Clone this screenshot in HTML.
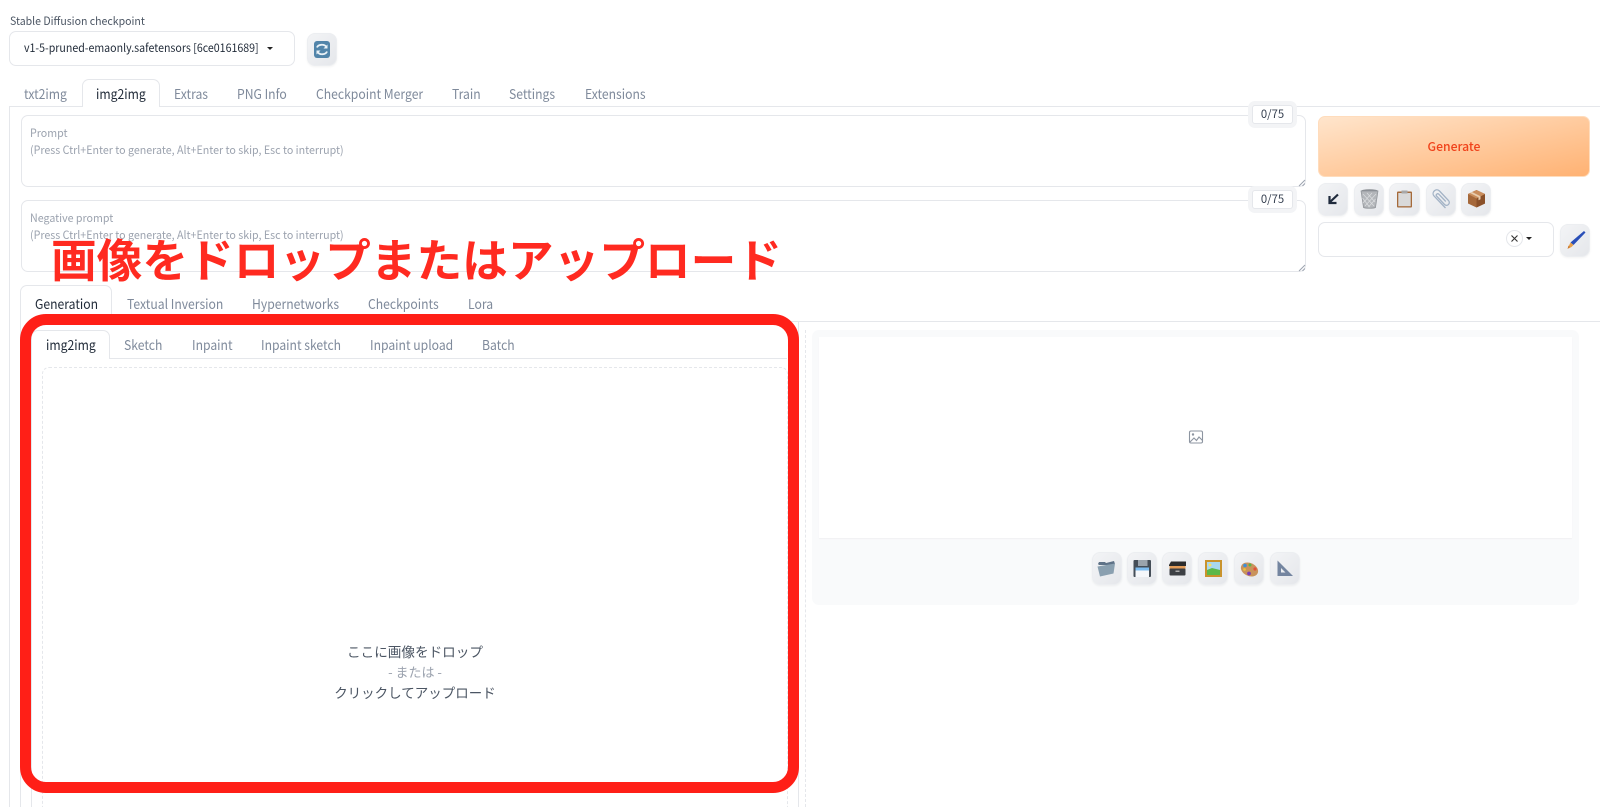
<!DOCTYPE html>
<html lang="ja"><head><meta charset="utf-8"><title>img2img</title>
<style>
*{box-sizing:border-box}
html{margin:0;padding:0;background:#fff;width:1600px;height:807px;overflow:hidden}
body{margin:0;padding:0;background:#fff;width:1600px;height:807px;position:relative;overflow:hidden;font-family:"Noto Sans CJK JP","Liberation Sans",sans-serif;color:#374151;font-size:13.5px}
#p{position:absolute;left:0;top:0;width:1600px;height:807px;overflow:hidden;contain:paint}
.a{position:absolute}
.t{position:absolute;white-space:nowrap;line-height:18px}
.tab{color:#7f8a9b;font-size:13.3px;transform:scaleX(.915);transform-origin:0 0}
.act{color:#1f2937}
.ph{color:#9ca3af;font-size:11.2px;line-height:16px;transform:scaleX(.953);transform-origin:0 0}
.box{position:absolute;background:#fff;border:1px solid #e5e7eb;border-radius:7px}
.btn{position:absolute;border-radius:8px;background:linear-gradient(to bottom right,#f3f4f6,#e5e7eb);border:1px solid #eceef1;box-shadow:0 1px 2px rgba(0,0,0,.05)}
.btn svg{position:absolute;left:-1px;top:-1px}
.line{position:absolute;background:#e5e7eb}
.cnt{position:absolute;width:41px;height:19px;background:#fff;border:1px solid #e5e7eb;border-radius:3px;box-shadow:0 0 0 4px #f3f4f6;font-size:11.3px;line-height:17px;text-align:center;color:#374151}
.dash{position:absolute;width:0;border-left:1px dashed #e5e7eb}
.tabbox{position:absolute;background:#fff;border:1px solid #e5e7eb;border-bottom:0;border-radius:7px 7px 0 0}
</style></head><body><div id="p">

<div class="t" style="left:10px;top:12px;font-size:11.2px;color:#4b5563;transform:scaleX(.943);transform-origin:0 0">Stable Diffusion checkpoint</div>
<div class="box" style="left:9px;top:31px;width:286px;height:35px"></div>
<div class="t" style="left:24px;top:39px;font-size:11.3px;color:#1f2937;transform:scaleX(.94);transform-origin:0 0">v1-5-pruned-emaonly.safetensors [6ce0161689]</div>
<div class="a" style="left:267px;top:47px;border:3.5px solid transparent;border-top:3.5px solid #222;"></div>
<div class="btn" style="left:307px;top:33px;width:30px;height:33px"><svg width="30" height="33" viewBox="0 0 30 33"><rect x="7" y="8" width="16" height="17" rx="3" fill="#5285aa"/><path d="M10 14.500c1-3 7-4 9.500-.5M20 18.500c-1 3-7 4-9.500 .5" fill="none" stroke="#eaf2f7" stroke-width="1.800"/><path d="M20.500 11.500v4h-4zM9.500 21.500v-4h4z" fill="#eaf2f7"/></svg></div>

<!-- top tabs -->
<div class="line" style="left:9px;top:106px;width:1591px;height:1px"></div>
<div class="line" style="left:9px;top:106px;width:1px;height:701px"></div>
<div class="tabbox" style="left:82px;top:79px;width:78px;height:28px"></div>
<div class="t tab" style="left:24px;top:84.500px">txt2img</div>
<div class="t tab act" style="left:96px;top:84.500px">img2img</div>
<div class="t tab" style="left:174px;top:84.500px">Extras</div>
<div class="t tab" style="left:237px;top:84.500px">PNG Info</div>
<div class="t tab" style="left:316px;top:84.500px">Checkpoint Merger</div>
<div class="t tab" style="left:452px;top:84.500px">Train</div>
<div class="t tab" style="left:509px;top:84.500px">Settings</div>
<div class="t tab" style="left:585px;top:84.500px">Extensions</div>

<!-- prompts -->
<div class="box" style="left:21px;top:115px;width:1285px;height:72px"></div>
<div class="t ph" style="left:30px;top:125px">Prompt</div>
<div class="t ph" style="left:30px;top:142px">(Press Ctrl+Enter to generate, Alt+Enter to skip, Esc to interrupt)</div>
<svg class="a" style="left:1298px;top:179px" width="8" height="8"><path d="M1 7L7 1M4.500 7L7 4.500" stroke="#9ca3af" fill="none"/></svg>
<div class="cnt" style="left:1252px;top:105px">0/75</div>

<div class="box" style="left:21px;top:200px;width:1285px;height:72px"></div>
<div class="t ph" style="left:30px;top:210px">Negative prompt</div>
<div class="t ph" style="left:30px;top:227px">(Press Ctrl+Enter to generate, Alt+Enter to skip, Esc to interrupt)</div>
<svg class="a" style="left:1298px;top:264px" width="8" height="8"><path d="M1 7L7 1M4.500 7L7 4.500" stroke="#9ca3af" fill="none"/></svg>
<div class="cnt" style="left:1252px;top:190px">0/75</div>

<!-- generate column -->
<div class="a" style="left:1318px;top:116px;width:272px;height:61px;border-radius:7px;background:linear-gradient(to bottom right,#ffe5cc,#ffb273);border:1px solid #ffdcbc;text-align:center;line-height:58px;color:#f0421a;font-size:12.2px;font-weight:500">Generate</div>

<div class="btn" style="left:1318px;top:183px;width:30px;height:33px"><svg width="30" height="33"><path d="M12 19L20 11.500M11.500 13v7h7" fill="none" stroke="#1f2a3c" stroke-width="2.200"/></svg></div>
<div class="btn" style="left:1354px;top:183px;width:30px;height:33px"><svg width="30" height="33"><ellipse cx="15.500" cy="8" rx="8.500" ry="1.800" fill="#8b8f94"/><path d="M7 8h17l-2.500 16.500c-2 1-10 1-12 0z" fill="#b3b6ba" stroke="#8f9398" stroke-width=".7"/><path d="M9 11l11 12M13 10l8 9M8.500 15l7 9M22 11L11 23M18 10L9 20M21.500 16l-7 8" stroke="#dcdee0" stroke-width=".7"/></svg></div>
<div class="btn" style="left:1389px;top:183px;width:31px;height:33px"><svg width="31" height="33"><rect x="8" y="8.500" width="15" height="16" rx="1" fill="#a56a3a"/><rect x="9.300" y="10" width="12.400" height="13.200" fill="#d9d9d9"/><rect x="12.500" y="7.500" width="6" height="3" fill="#a8a8a8"/></svg></div>
<div class="btn" style="left:1426px;top:183px;width:30px;height:33px"><svg width="30" height="33"><path d="M19.500 25L8 13c-3-3.500 2-8.500 5.500-5l9 9.500c2.500 3-1.500 6.500-4 4L10.500 13c-1-1.500 1-3 2.300-1.800l7 7.300" fill="none" stroke="#a3b3c6" stroke-width="1.300"/></svg></div>
<div class="btn" style="left:1461px;top:183px;width:30px;height:33px"><svg width="30" height="33"><path d="M15.500 7l8.500 4v9.500l-8.500 4-8.500-4V11z" fill="#a5683a"/><path d="M15.500 15.500l8.500-4.500v9.500l-8.500 4z" fill="#8a5029"/><path d="M7 11l8.500-4 8.500 4-8.500 4.500z" fill="#c98d5c"/><path d="M11 9l8.500 4.300v3l-2 1v-3L9 10z" fill="#e8cdae"/></svg></div>

<div class="box" style="left:1318px;top:222px;width:236px;height:35px"></div>
<div class="a" style="left:1506px;top:230px;width:17px;height:17px;border-radius:50%;border:1px solid #e5e7eb;background:#fff"></div>
<svg class="a" style="left:1506px;top:230px" width="17" height="17"><path d="M5.500 5.500l6 6M11.500 5.500l-6 6" stroke="#333" stroke-width="1.100"/></svg>
<div class="a" style="left:1526px;top:237px;border:3px solid transparent;border-top:3.500px solid #222"></div>
<div class="btn" style="left:1560px;top:224px;width:30px;height:33px"><svg width="30" height="33"><path d="M24 7l1.500 1.500L13.500 21l-3-2.500z" fill="#2a4fb8"/><path d="M10.500 18.500l3 2.500-2 2-3 1.500 .5-3z" fill="#e8a04a"/><path d="M8.500 21.500l1.500 1.500-2.500 2z" fill="#c9762a"/></svg></div>

<!-- generation tabs -->
<div class="line" style="left:20px;top:321px;width:1580px;height:1px"></div>
<div class="line" style="left:20px;top:321px;width:1px;height:486px"></div>
<div class="tabbox" style="left:20px;top:285px;width:92px;height:37px"></div>
<div class="t tab act" style="left:35px;top:295px">Generation</div>
<div class="t tab" style="left:127px;top:295px">Textual Inversion</div>
<div class="t tab" style="left:252px;top:295px">Hypernetworks</div>
<div class="t tab" style="left:368px;top:295px">Checkpoints</div>
<div class="t tab" style="left:468px;top:295px">Lora</div>

<!-- img2img column -->
<div class="line" style="left:31px;top:358px;width:756px;height:1px"></div>
<div class="line" style="left:31px;top:330px;width:1px;height:477px"></div>
<div class="line" style="left:798px;top:321px;width:1px;height:486px"></div>
<div class="tabbox" style="left:31px;top:330px;width:79px;height:29px"></div>
<div class="t tab act" style="left:46px;top:336px">img2img</div>
<div class="t tab" style="left:124px;top:336px">Sketch</div>
<div class="t tab" style="left:192px;top:336px">Inpaint</div>
<div class="t tab" style="left:261px;top:336px">Inpaint sketch</div>
<div class="t tab" style="left:370px;top:336px">Inpaint upload</div>
<div class="t tab" style="left:482px;top:336px">Batch</div>

<div class="a" style="left:42px;top:367px;width:746px;height:440px;border:1px dashed #e5e7eb;border-bottom:0;border-radius:7px 7px 0 0"></div>
<div class="dash" style="left:805px;top:330px;height:477px"></div>

<div class="t" style="left:42px;width:746px;text-align:center;top:642px;color:#4b5563;font-size:13.6px">ここに画像をドロップ</div>
<div class="t" style="left:42px;width:746px;text-align:center;top:663px;color:#9ca3af;font-size:13px">- または -</div>
<div class="t" style="left:42px;width:746px;text-align:center;top:683px;color:#4b5563;font-size:13.5px">クリックしてアップロード</div>

<!-- gallery -->
<div class="a" style="left:812px;top:330px;width:767px;height:275px;background:#f9fafb;border-radius:7px"></div>
<div class="a" style="left:819px;top:337px;width:753px;height:201px;background:#fff;box-shadow:0 1px 1px rgba(0,0,0,.04)"></div>
<svg class="a" style="left:1188px;top:429px" width="16" height="16" viewBox="0 0 16 16"><rect x="1.500" y="2" width="13" height="12" rx="1.500" fill="none" stroke="#8d95a1" stroke-width="1.100"/><circle cx="5" cy="5.500" r="1.200" fill="#8d95a1"/><path d="M2 13l4-4 2.500 2.500L11 8l3.500 3.500" fill="none" stroke="#8d95a1" stroke-width="1.100"/></svg>

<div class="btn" style="left:1092px;top:552px;width:30px;height:33px"><svg width="30" height="33"><path d="M6 12l1-2h6l1 1 8-2 1 3-3 1H7z" fill="#5f7388"/><path d="M5.500 14.500L23 11.500l-1.500 10L8 24.500z" fill="#8aa0b0"/></svg></div>
<div class="btn" style="left:1127px;top:552px;width:30px;height:33px"><svg width="30" height="33"><rect x="6.500" y="8" width="17.500" height="17" rx="1" fill="#454e58"/><rect x="11" y="8" width="9.500" height="6" fill="#9aa3ac"/><rect x="8.500" y="15.500" width="13.500" height="9.500" fill="#f5f7fa"/><rect x="8.500" y="15.500" width="13.500" height="3" fill="#7dbcf0"/></svg></div>
<div class="btn" style="left:1162px;top:552px;width:30px;height:33px"><svg width="30" height="33"><path d="M7 13l2-3.500h15V14H7z" fill="#2c2c2c"/><path d="M7.500 14h16v3h-16z" fill="#e39c58"/><rect x="7.500" y="16.500" width="16" height="7" rx="1" fill="#3c3f44"/><rect x="13.500" y="18.500" width="4" height="1.500" fill="#aaa"/></svg></div>
<div class="btn" style="left:1198px;top:552px;width:30px;height:33px"><svg width="30" height="33"><rect x="7" y="8" width="17" height="17" fill="#c9932c"/><rect x="9" y="10" width="13" height="13" fill="#a8d8ee"/><path d="M9 18l5-2 8 2v5H9z" fill="#5cb848"/><circle cx="12" cy="13" r="1.500" fill="#f5e06a"/></svg></div>
<div class="btn" style="left:1234px;top:552px;width:30px;height:33px"><svg width="30" height="33"><ellipse cx="15.500" cy="17.500" rx="9" ry="6.500" transform="rotate(25 15.500 17.500)" fill="#c9935c"/><circle cx="11" cy="13.500" r="1.800" fill="#3d8fd8"/><circle cx="16" cy="13" r="1.500" fill="#58b548"/><circle cx="21" cy="17" r="1.600" fill="#e44f3a"/><circle cx="15" cy="21.500" r="1.900" fill="#7a3fb5"/><circle cx="10.500" cy="17.500" r="1.400" fill="#e8c23a"/></svg></div>
<div class="btn" style="left:1270px;top:552px;width:30px;height:33px"><svg width="30" height="33"><path fill-rule="evenodd" d="M7.500 8.500L23 24H7.500zM11 16v4.500h4.500z" fill="#7485a0"/></svg></div>

<!-- annotations -->
<div class="a" style="left:20px;top:314px;width:779px;height:479px;border:11px solid #ff1f17;border-radius:26px"></div>
<div class="t" style="left:51px;top:232px;font-size:45.7px;line-height:52px;font-weight:700;color:#ff2a20;letter-spacing:0">画像をドロップまたはアップロード</div>

</div></body></html>
